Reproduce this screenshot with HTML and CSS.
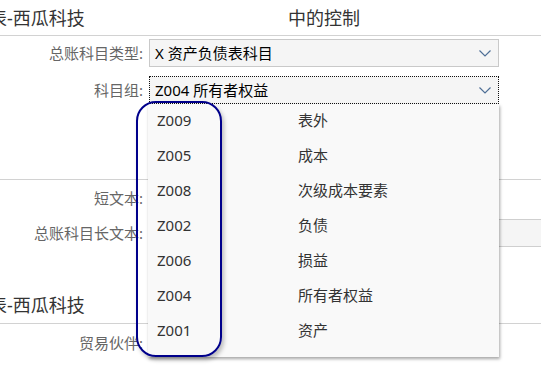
FILE: index.html
```html
<!DOCTYPE html>
<html lang="zh">
<head>
<meta charset="utf-8">
<link rel="stylesheet" href="styles.css">
</head>
<body>
<div class="page">
  <div class="header">
    <div class="title title-main">表-西瓜科技</div>
    <div class="title">中的控制</div>
  </div>

  <div class="form form-top">
    <div class="label">总账科目类型:</div>
    <div class="select">
      <span class="select-text">X 资产负债表科目</span>
      <svg class="chev" width="12" height="7" viewBox="0 0 12 7"><polyline points="0.5,0.5 6,6 11.5,0.5" fill="none" stroke="#4f6f96" stroke-width="1.2"/></svg>
    </div>

    <div class="label">科目组:</div>
    <div class="select select-focus">
      <span class="select-text">Z004 所有者权益</span>
      <svg class="chev" width="12" height="7" viewBox="0 0 12 7"><polyline points="0.5,0.5 6,6 11.5,0.5" fill="none" stroke="#4f6f96" stroke-width="1.2"/></svg>
      <div class="dropdown">
        <div class="item"><span class="code">Z009</span><span class="name">表外</span></div>
        <div class="item"><span class="code">Z005</span><span class="name">成本</span></div>
        <div class="item"><span class="code">Z008</span><span class="name">次级成本要素</span></div>
        <div class="item"><span class="code">Z002</span><span class="name">负债</span></div>
        <div class="item"><span class="code">Z006</span><span class="name">损益</span></div>
        <div class="item"><span class="code">Z004</span><span class="name">所有者权益</span></div>
        <div class="item"><span class="code">Z001</span><span class="name">资产</span></div>
        <div class="mark"></div>
      </div>
    </div>
  </div>

  <div class="form form-text">
    <div class="label">短文本:</div>
    <div class="field field-short"></div>
    <div class="label">总账科目长文本:</div>
    <div class="field field-long"></div>
  </div>

  <div class="section">
    <div class="title title-main">表-西瓜科技</div>
  </div>

  <div class="form form-partner">
    <div class="label">贸易伙伴:</div>
    <div class="field field-short"></div>
  </div>
</div>
</body>
</html>
```
FILE: styles.css
```css
html, body {
  margin: 0;
  padding: 0;
  background: #ffffff;
}
body {
  font-family: "Noto Sans", "Noto Sans CJK SC", sans-serif;
}
.page {
  width: 541px;
  height: 378px;
  overflow: hidden;
  position: relative;
  background: #fff;
}
.header {
  display: flex;
  align-items: center;
  height: 35px;
  border-bottom: 1px solid #d2d2d2;
}
.title {
  font-size: 18px;
  color: #333;
  line-height: 24px;
  white-space: nowrap;
}
.title-main {
  margin-left: -11px;
  width: 299px;
}
.form {
  display: grid;
  grid-template-columns: 143px 1fr;
  column-gap: 6px;
  align-items: center;
}
.form-top {
  margin-top: 3px;
  row-gap: 9px;
  padding-bottom: 75px;
  border-bottom: 1px solid #d2d2d2;
}
.label {
  text-align: right;
  font-size: 15px;
  color: #666;
  line-height: 20px;
  white-space: nowrap;
}
.select {
  position: relative;
  box-sizing: border-box;
  width: 350px;
  height: 28px;
  background: #f5f5f5;
  border: 1px solid #c9c9c9;
  display: flex;
  align-items: center;
  padding-left: 5px;
}
.select-focus {
  border: 1px dotted #111;
}
.select-text {
  font-size: 15px;
  color: #000;
  line-height: 20px;
  white-space: nowrap;
  flex: 1;
}
.chev {
  margin-right: 7px;
}
.form-text {
  margin-top: 4px;
  row-gap: 7px;
}
.field {
  box-sizing: border-box;
  height: 28px;
  background: #f5f5f5;
  border-top: 1px solid #cfcfcf;
  border-bottom: 1px solid #cfcfcf;
}
.field-short {
  width: 300px;
}
.field-long {
  width: 420px;
}
.section {
  margin-top: 40px;
  height: 36px;
  display: flex;
  align-items: center;
  border-bottom: 1px solid #d2d2d2;
}
.form-partner {
  margin-top: 5px;
}
.dropdown {
  position: absolute;
  left: -2px;
  top: 27px;
  width: 351px;
  padding-bottom: 8px;
  background: #f9f9f9;
  box-shadow: 1px 2px 3px rgba(0, 0, 0, 0.35);
  z-index: 5;
}
.item {
  display: flex;
  align-items: center;
  box-sizing: border-box;
  height: 35px;
  padding-bottom: 3px;
  font-size: 15px;
  color: #333;
  line-height: 20px;
}
.code {
  width: 141px;
  padding-left: 9px;
}
.name {
  white-space: nowrap;
}
.mark {
  position: absolute;
  left: -12px;
  top: -3px;
  width: 86px;
  height: 256px;
  box-sizing: border-box;
  border: 2px solid #00008b;
  border-radius: 20px;
  box-shadow: 2px 3px 4px rgba(0, 0, 0, 0.25);
}
```
